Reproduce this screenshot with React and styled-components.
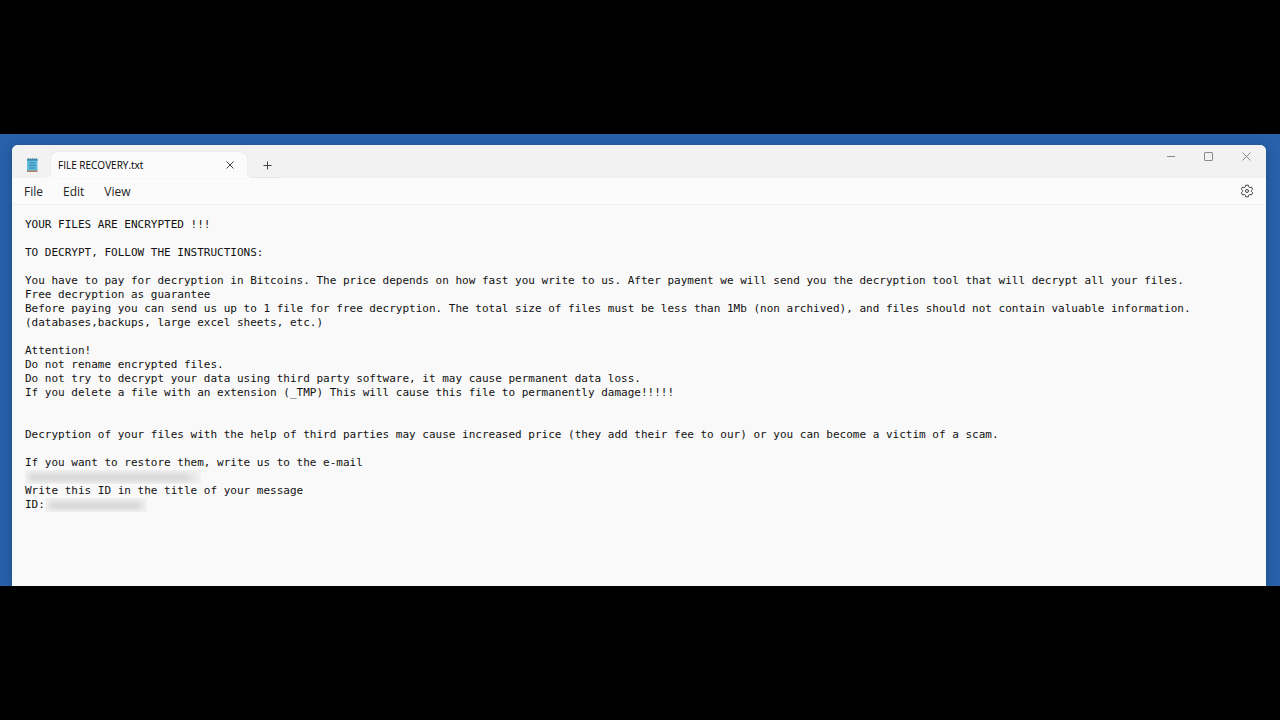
import React, { useState } from 'react';
import styled, { createGlobalStyle } from 'styled-components';

const LINE = 14;
const EDITOR_TOP = 13;

const NOTE = `YOUR FILES ARE ENCRYPTED !!!

TO DECRYPT, FOLLOW THE INSTRUCTIONS:

You have to pay for decryption in Bitcoins. The price depends on how fast you write to us. After payment we will send you the decryption tool that will decrypt all your files.
Free decryption as guarantee
Before paying you can send us up to 1 file for free decryption. The total size of files must be less than 1Mb (non archived), and files should not contain valuable information.
(databases,backups, large excel sheets, etc.)

Attention!
Do not rename encrypted files.
Do not try to decrypt your data using third party software, it may cause permanent data loss.
If you delete a file with an extension (_TMP) This will cause this file to permanently damage!!!!!


Decryption of your files with the help of third parties may cause increased price (they add their fee to our) or you can become a victim of a scam.

If you want to restore them, write us to the e-mail

Write this ID in the title of your message
ID:`;

const GlobalStyle = createGlobalStyle`
  * {
    box-sizing: border-box;
  }

  body {
    margin: 0;
    background: #000000;
    font-family: 'Open Sans', 'Noto Sans', sans-serif;
  }

  button {
    display: flex;
    align-items: center;
    justify-content: center;
    padding: 0;
    border: 0;
    background: transparent;
    font-family: inherit;
    color: inherit;
  }
`;

const Screen = styled.main`
  display: flex;
  flex-direction: column;
  justify-content: center;
  min-height: 100vh;
`;

const Desktop = styled.div`
  padding: 11px 14px 0 12px;
  background: #2962ab;
  overflow: hidden;
`;

const Window = styled.section`
  border-radius: 6px 6px 0 0;
  background: #f9f9f9;
  box-shadow: 0 2px 12px rgba(0, 15, 50, 0.3);
  overflow: hidden;
`;

const TitleBar = styled.header`
  display: flex;
  align-items: flex-end;
  height: 33px;
  padding-left: 14px;
  background: #f2f2f2;
`;

const AppIcon = styled.svg`
  width: 12px;
  height: 16px;
  margin: 0 13px 5px 0;
`;

const Tab = styled.div`
  position: relative;
  display: flex;
  align-items: center;
  justify-content: space-between;
  width: 196px;
  height: 26px;
  padding: 0 9px 0 7px;
  border-radius: 6px 6px 0 0;
  background: #fbfbfb;
  box-shadow: 0 0 1px rgba(0, 0, 0, 0.2);
  font-size: 10px;
  font-weight: 500;
  color: #000000;

  /* flared foot on each side */
  &::before,
  &::after {
    content: '';
    position: absolute;
    bottom: 0;
    width: 4px;
    height: 4px;
  }

  &::before {
    right: 100%;
    background: radial-gradient(circle at 0 0, transparent 3px, #fbfbfb 4px);
  }

  &::after {
    left: 100%;
    background: radial-gradient(circle at 100% 0, transparent 3px, #fbfbfb 4px);
  }
`;

const IconButton = styled.button`
  width: ${({ $size }) => $size}px;
  height: ${({ $size }) => $size}px;
  color: #444444;
`;

const NewTab = styled.div`
  display: flex;
  align-items: center;
  justify-content: center;
  width: 33px;
  height: 26px;
  padding-left: 7px;
  border-bottom: 1px solid #e6e6e6;
`;

const WindowControls = styled.div`
  display: flex;
  align-self: flex-start;
  margin-left: auto;
`;

const ControlButton = styled.button`
  width: 38px;
  height: 22px;
  color: #8a8a8a;
`;

const MenuBar = styled.nav`
  display: flex;
  align-items: center;
  justify-content: space-between;
  height: 27px;
  padding: 0 12px 0 2px;
  border-bottom: 1px solid #f0f0f0;
  background: #fbfbfb;
`;

const MenuList = styled.div`
  display: flex;
`;

const MenuButton = styled.button`
  && {
    padding: 0 10px;
  }
  height: 24px;
  font-size: 12px;
  color: #262626;
`;

const EditorArea = styled.div`
  position: relative;
`;

const Editor = styled.textarea`
  display: block;
  width: 100%;
  padding: ${EDITOR_TOP}px 13px 4px;
  border: 0;
  outline: 0;
  background: transparent;
  font-family: 'DejaVu Sans Mono', monospace;
  font-size: 11px;
  line-height: ${LINE}px;
  color: #111111;
  resize: none;
  overflow: hidden;
`;

// Smudge laid over a hidden value in the note
const Redaction = styled.span`
  position: absolute;
  top: ${({ $line }) => EDITOR_TOP + $line * LINE}px;
  left: ${({ $left }) => $left}px;
  width: ${({ $width }) => $width}px;
  height: 14px;
  background:
    linear-gradient(90deg, #f2f2f2, transparent 8px, transparent 90%, #f2f2f2),
    linear-gradient(#efefef, #dadada 45%, #dadada 65%, #efefef);
`;

function Glyph({ size = 10, children }) {
  return (
    <svg
      width={size}
      height={size}
      viewBox={`0 0 ${size} ${size}`}
      fill="none"
      stroke="currentColor"
      strokeWidth="1"
      aria-hidden="true"
    >
      {children}
    </svg>
  );
}

function NotepadIcon() {
  return (
    <AppIcon viewBox="0 0 12 16" aria-hidden="true">
      <rect x="1" y="2" width="10.5" height="12" fill="#62bcdc" />
      <rect x="1" y="2" width="10.5" height="2" fill="#3f9cc0" />
      <rect x="1" y="13.6" width="10.5" height="1.3" fill="#b5714f" />
      <path d="M2.2 1v2M4.2 1v2M6.2 1v2M8.2 1v2M10.2 1v2" stroke="#3d6f86" strokeWidth="0.8" />
      <path d="M3 6h6.5M3 8.5h6.5M3 11h6.5" stroke="#2980a3" strokeWidth="0.9" />
    </AppIcon>
  );
}

function GearIcon() {
  return (
    <svg width="14" height="14" viewBox="0 0 14 14" fill="none" stroke="currentColor" strokeLinejoin="round" aria-hidden="true">
      <path d="M5.7 1.2h2.6l.4 1.7 1 .6 1.7-.5 1.3 2.2L11.4 6.4v1.2l1.3 1.2-1.3 2.2-1.7-.5-1 .6-.4 1.7H5.7l-.4-1.7-1-.6-1.7.5-1.3-2.2 1.3-1.2V6.4L1.3 5.2 2.6 3l1.7.5 1-.6z" />
      <circle cx="7" cy="7" r="1.5" />
    </svg>
  );
}

function App() {
  const [text, setText] = useState(NOTE);

  return (
    <>
      <GlobalStyle />
      <Screen>
        <Desktop>
          <Window>
            <TitleBar>
              <NotepadIcon />
              <Tab>
                <span>FILE RECOVERY.txt</span>
                <IconButton $size={16} aria-label="Close tab">
                  <Glyph>
                    <path d="M1.5 1.5l7 7M8.5 1.5l-7 7" />
                  </Glyph>
                </IconButton>
              </Tab>
              <NewTab>
                <IconButton $size={16} aria-label="New tab">
                  <Glyph>
                    <path d="M5.5 1.5v8M1.5 5.5h8" />
                  </Glyph>
                </IconButton>
              </NewTab>
              <WindowControls>
                <ControlButton aria-label="Minimize">
                  <Glyph>
                    <path d="M1 5.5h8" />
                  </Glyph>
                </ControlButton>
                <ControlButton aria-label="Maximize">
                  <Glyph>
                    <rect x="0.5" y="1.5" width="8" height="8" rx="0.5" />
                  </Glyph>
                </ControlButton>
                <ControlButton aria-label="Close">
                  <Glyph>
                    <path d="M0.5 1.5l8 8M8.5 1.5l-8 8" />
                  </Glyph>
                </ControlButton>
              </WindowControls>
            </TitleBar>
            <MenuBar>
              <MenuList>
                <MenuButton>File</MenuButton>
                <MenuButton>Edit</MenuButton>
                <MenuButton>View</MenuButton>
              </MenuList>
              <IconButton $size={14} aria-label="Settings">
                <GearIcon />
              </IconButton>
            </MenuBar>
            <EditorArea>
              <Editor
                aria-label="Text editor"
                rows={26}
                spellCheck={false}
                value={text}
                onChange={(e) => setText(e.target.value)}
              />
              <Redaction $line={18} $left={13} $width={176} />
              <Redaction $line={20} $left={33} $width={102} />
            </EditorArea>
          </Window>
        </Desktop>
      </Screen>
    </>
  );
}

export default App;
